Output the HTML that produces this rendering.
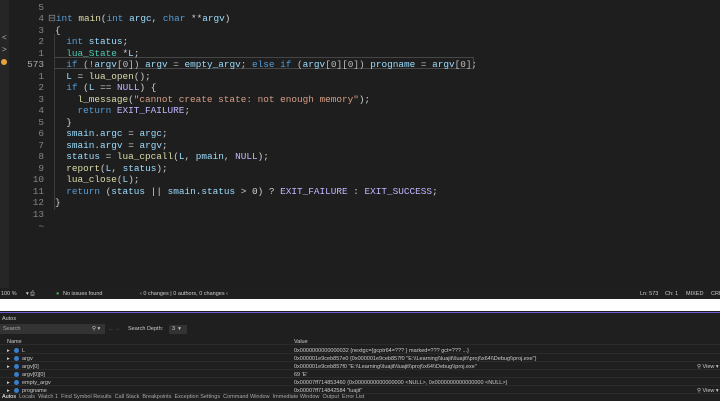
<!DOCTYPE html><html><head><style>
*{margin:0;padding:0;box-sizing:border-box}
body{width:720px;height:401px;background:#1e1e1e;overflow:hidden;position:relative;font-family:"Liberation Sans",sans-serif}
.ed{position:absolute;left:0;top:0;width:720px;height:288px;background:#1e1e1e}
.gut{position:absolute;left:0;top:0;width:9px;height:288px;background:#262626}
.ln{position:absolute;left:14px;width:30px;text-align:right;font:9.4px "Liberation Mono",monospace;color:#858585}
.cd{position:absolute;left:55px;font:9.4px "Liberation Mono",monospace;color:#d0d0d0;white-space:pre}
.k{color:#569cd6}.t{color:#4ec9b0}.f{color:#dcdcaa}.v{color:#9cdcfe}.s{color:#d69d85}.m{color:#beb7ff}.g{color:#8a8a8a}
.cur{position:absolute;left:54px;top:57px;width:420px;height:12px;border:1px solid #464646}
.sb{position:absolute;left:0;top:289px;width:720px;height:10px;background:#1f1f1f;font-size:5.5px;color:#ccc}
.sb span{position:absolute;top:2px}
.wh{position:absolute;left:0;top:299px;width:720px;height:12px;background:#fff}
.pl{position:absolute;left:0;top:312px;width:720px;height:1px;background:#6e5bd6}
.pn{position:absolute;left:0;top:313px;width:720px;height:88px;background:#1f1f1f;font-size:5.5px;color:#ccc}
.pn span{position:absolute}
.row{position:absolute;left:0;width:720px;height:8px;border-bottom:1px solid #2b2b2b}
.ic{display:inline-block;width:5px;height:5px;border-radius:50%;background:#3a7dc9;position:absolute}
</style></head><body>
<div class="ed"><div class="gut"></div>
<div style="position:absolute;left:2px;top:33px;color:#aaa;font-size:8px">&lt;</div>
<div style="position:absolute;left:2px;top:45px;color:#aaa;font-size:8px">&gt;</div>
<div style="position:absolute;left:1px;top:59px;width:6px;height:6px;border-radius:50%;background:#e8a23c"></div>
<div class="cur"></div>
<div style="position:absolute;left:54px;top:34px;width:1px;height:176px;background:#3c3c3c"></div>
<div class="ln" style="top:2px">5</div><div class="ln" style="top:13px">4</div><div class="ln" style="top:25px">3</div><div class="ln" style="top:36px">2</div><div class="ln" style="top:48px">1</div><div class="ln" style="top:59px;color:#aaa">573</div><div class="ln" style="top:71px">1</div><div class="ln" style="top:82px">2</div><div class="ln" style="top:94px">3</div><div class="ln" style="top:105px">4</div><div class="ln" style="top:117px">5</div><div class="ln" style="top:128px">6</div><div class="ln" style="top:140px">7</div><div class="ln" style="top:151px">8</div><div class="ln" style="top:163px">9</div><div class="ln" style="top:174px">10</div><div class="ln" style="top:186px">11</div><div class="ln" style="top:197px">12</div><div class="ln" style="top:209px">13</div><div class="ln" style="top:221px">~</div>
<div class="cd" style="left:48px;top:13px"><span class="g">⊟</span><span class="k">int</span> <span class="f">main</span>(<span class="k">int</span> <span class="v">argc</span>, <span class="k">char</span> **<span class="v">argv</span>)</div>
<div class="cd" style="top:25px">{</div>
<div class="cd" style="top:36px">  <span class="k">int</span> <span class="v">status</span>;</div>
<div class="cd" style="top:48px">  <span class="t">lua_State</span> *<span class="v">L</span>;</div>
<div class="cd" style="top:59px;color:#bdbdbd">  <span class="k">if</span> (!<span class="v">argv</span>[0]) <span class="v">argv</span> = <span class="v">empty_argv</span>; <span class="k">else if</span> (<span class="v">argv</span>[0][0]) <span class="v">progname</span> = <span class="v">argv</span>[0];</div>
<div class="cd" style="top:71px">  <span class="v">L</span> = <span class="f">lua_open</span>();</div>
<div class="cd" style="top:82px">  <span class="k">if</span> (<span class="v">L</span> == <span class="m">NULL</span>) {</div>
<div class="cd" style="top:94px">    <span class="f">l_message</span>(<span class="s">"cannot create state: not enough memory"</span>);</div>
<div class="cd" style="top:105px">    <span class="k">return</span> <span class="m">EXIT_FAILURE</span>;</div>
<div class="cd" style="top:117px">  }</div>
<div class="cd" style="top:128px">  <span class="v">smain</span>.<span class="v">argc</span> = <span class="v">argc</span>;</div>
<div class="cd" style="top:140px">  <span class="v">smain</span>.<span class="v">argv</span> = <span class="v">argv</span>;</div>
<div class="cd" style="top:151px">  <span class="v">status</span> = <span class="f">lua_cpcall</span>(<span class="v">L</span>, <span class="v">pmain</span>, <span class="m">NULL</span>);</div>
<div class="cd" style="top:163px">  <span class="f">report</span>(<span class="v">L</span>, <span class="v">status</span>);</div>
<div class="cd" style="top:174px">  <span class="f">lua_close</span>(<span class="v">L</span>);</div>
<div class="cd" style="top:186px">  <span class="k">return</span> (<span class="v">status</span> || <span class="v">smain</span>.<span class="v">status</span> &gt; 0) ? <span class="m">EXIT_FAILURE</span> : <span class="m">EXIT_SUCCESS</span>;</div>
<div class="cd" style="top:197px">}</div>
</div>
<div class="sb"><span style="left:1px">100 %</span><span style="left:26px">▾ ⎙</span><span style="left:56px;color:#4caf50">●</span><span style="left:63px">No issues found</span><span style="left:140px">‹ 0 changes | 0 authors, 0 changes ‹</span><span style="left:640px">Ln: 573</span><span style="left:665px">Ch: 1</span><span style="left:686px">MIXED</span><span style="left:711px">CRL</span></div>
<div class="wh"></div><div class="pl"></div>
<div class="pn">
<span style="left:2px;top:3px">Autos</span>
<div style="position:absolute;left:0;top:11px;width:105px;height:10px;background:#333"></div>
<span style="left:3px;top:13px;color:#aaa">Search</span><span style="left:92px;top:13px">⚲ ▾</span>
<span style="left:108px;top:13px;color:#666">← →</span><span style="left:128px;top:13px">Search Depth:</span>
<div style="position:absolute;left:169px;top:12px;width:18px;height:9px;background:#333"></div><span style="left:172px;top:13px">3 &nbsp;▾</span>
<div class="row" style="top:24px"></div>
<span style="left:7px;top:26px">Name</span><span style="left:294px;top:26px">Value</span>
<div class="row" style="top:33px"></div><div class="row" style="top:41px"></div><div class="row" style="top:49px"></div><div class="row" style="top:57px"></div><div class="row" style="top:65px"></div><div class="row" style="top:73px"></div>
<span style="left:7px;top:35px">▸</span><i class="ic" style="left:14px;top:35px"></i><span style="left:22px;top:35px">L</span><span style="left:294px;top:35px">0x0000000000000032 {nextgc={gcptr64=??? } marked=??? gct=??? ...}</span>
<span style="left:7px;top:43px">▸</span><i class="ic" style="left:14px;top:43px"></i><span style="left:22px;top:43px">argv</span><span style="left:294px;top:43px">0x000001e9ceb857e0 {0x000001e9ceb857f0 "E:\\Learning\\luajit\\luajit\\proj\\x64\\Debug\\proj.exe"}</span>
<span style="left:7px;top:51px">▸</span><i class="ic" style="left:14px;top:51px"></i><span style="left:22px;top:51px">argv[0]</span><span style="left:294px;top:51px">0x000001e9ceb857f0 "E:\\Learning\\luajit\\luajit\\proj\\x64\\Debug\\proj.exe"</span><span style="left:697px;top:51px">⚲ View ▾</span>
<i class="ic" style="left:14px;top:59px"></i><span style="left:22px;top:59px">argv[0][0]</span><span style="left:294px;top:59px">69 'E'</span>
<span style="left:7px;top:67px">▸</span><i class="ic" style="left:14px;top:67px"></i><span style="left:22px;top:67px">empty_argv</span><span style="left:294px;top:67px">0x00007ff714853460 {0x0000000000000000 &lt;NULL&gt;, 0x0000000000000000 &lt;NULL&gt;}</span>
<span style="left:7px;top:75px">▸</span><i class="ic" style="left:14px;top:75px"></i><span style="left:22px;top:75px">progname</span><span style="left:294px;top:75px">0x00007ff714842584 "luajit"</span><span style="left:697px;top:75px">⚲ View ▾</span>
<div style="position:absolute;left:0;top:81px;width:720px;height:7px;background:#1f1f1f"></div>
<span style="left:2px;top:81px;color:#fff">Autos &nbsp;<span style="position:static;color:#aaa">Locals &nbsp;Watch 1 &nbsp;Find Symbol Results &nbsp;Call Stack &nbsp;Breakpoints &nbsp;Exception Settings &nbsp;Command Window &nbsp;Immediate Window &nbsp;Output &nbsp;Error List</span></span>
</div>
</body></html>
